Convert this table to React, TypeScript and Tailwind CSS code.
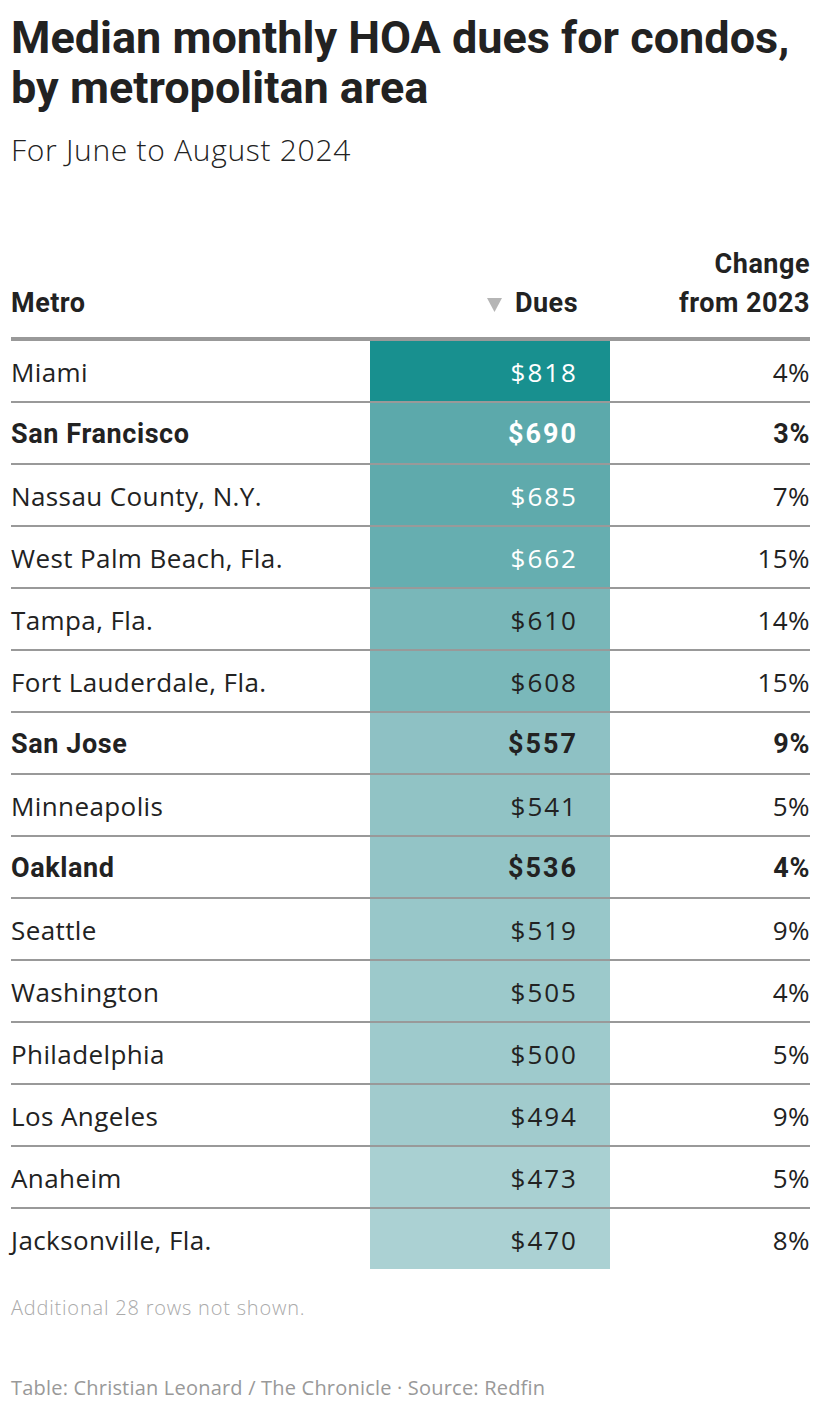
const rows = [
  { metro: 'Miami', dues: 818, change: 4, bg: '#18908f', light: true, bold: false },
  { metro: 'San Francisco', dues: 690, change: 3, bg: '#5ca9ab', light: true, bold: true },
  { metro: 'Nassau County, N.Y.', dues: 685, change: 7, bg: '#5faaac', light: true, bold: false },
  { metro: 'West Palm Beach, Fla.', dues: 662, change: 15, bg: '#66aeb0', light: true, bold: false },
  { metro: 'Tampa, Fla.', dues: 610, change: 14, bg: '#79b7b9', light: false, bold: false },
  { metro: 'Fort Lauderdale, Fla.', dues: 608, change: 15, bg: '#7ab8ba', light: false, bold: false },
  { metro: 'San Jose', dues: 557, change: 9, bg: '#8ec1c4', light: false, bold: true },
  { metro: 'Minneapolis', dues: 541, change: 5, bg: '#91c3c5', light: false, bold: false },
  { metro: 'Oakland', dues: 536, change: 4, bg: '#93c4c6', light: false, bold: true },
  { metro: 'Seattle', dues: 519, change: 9, bg: '#98c7c9', light: false, bold: false },
  { metro: 'Washington', dues: 505, change: 4, bg: '#9cc9cb', light: false, bold: false },
  { metro: 'Philadelphia', dues: 500, change: 5, bg: '#9ecacc', light: false, bold: false },
  { metro: 'Los Angeles', dues: 494, change: 9, bg: '#a1cbcd', light: false, bold: false },
  { metro: 'Anaheim', dues: 473, change: 5, bg: '#a9d0d2', light: false, bold: false },
  { metro: 'Jacksonville, Fla.', dues: 470, change: 8, bg: '#abd1d3', light: false, bold: false },
]

export default function App() {
  return (
    <div className="min-h-[1414px] bg-white pl-[11px] pr-[10px] pt-[13px] text-[#222] font-['Open_Sans',sans-serif]">
      <h1 className="font-['Roboto',sans-serif] text-[45px] font-bold leading-[50px]">
        Median monthly HOA dues for condos,
        <br />
        by metropolitan area
      </h1>
      <p className="mt-[19px] text-[30px] font-light leading-[36px] tracking-[0.7px]">For June to August 2024</p>

      <div className="mt-[77px]">
        <div className="flex items-end border-b-4 border-[#999] pb-[14px] font-['Roboto',sans-serif] text-[27px] font-bold leading-[39px] tracking-[0.5px]">
          <div className="flex-1">Metro</div>
          <div className="flex w-[240px] items-center justify-end pr-[32px]">
            <svg width="15" height="14" viewBox="0 0 15 14" className="mr-[13px] mt-[2px]">
              <polygon points="0,0 15,0 7.5,14" fill="#b5b5b5" />
            </svg>
            Dues
          </div>
          <div className="w-[200px] text-right">
            Change
            <br />
            from 2023
          </div>
        </div>

        {rows.map((r, i) => (
          <div
            key={r.metro}
            className={`flex ${i < rows.length - 1 ? 'h-[62px] border-b-2 border-[#999]' : 'h-[60px]'} ${
              r.bold
                ? "font-['Roboto',sans-serif] text-[27px] font-bold tracking-[0.6px]"
                : 'text-[26px] font-normal tracking-[0.4px]'
            }`}
          >
            <div className="flex flex-1 items-center pt-[2px]">{r.metro}</div>
            <div
              className={`flex w-[240px] items-center justify-end pr-[32px] pt-[2px] tracking-[2px] ${
                r.light ? 'text-white' : 'text-[#222]'
              }`}
              style={{ backgroundColor: r.bg }}
            >
              ${r.dues}
            </div>
            <div className="flex w-[200px] items-center justify-end pt-[2px]">{r.change}%</div>
          </div>
        ))}
      </div>

      <p className="mt-[24px] text-[20px] font-light tracking-[0.8px] text-[#aaa]">Additional 28 rows not shown.</p>
      <p className="mt-[50px] text-[20px] font-normal tracking-[0.2px] text-[#999]">
        Table: Christian Leonard / The Chronicle · Source: Redfin
      </p>
    </div>
  )
}
